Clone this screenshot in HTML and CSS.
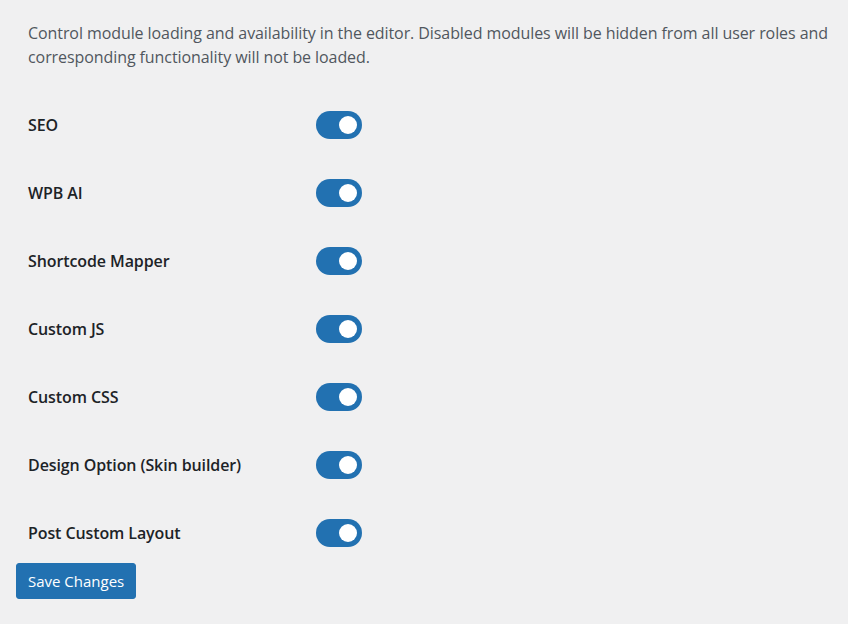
FILE: index.html
```html
<!DOCTYPE html>
<html lang="en">
<head>
    <meta charset="UTF-8">
    <title>Module Manager</title>
    <link rel="stylesheet" href="styles.css">
</head>
<body>
    <div class="wrap">
        <form class="modules-form">
            <p class="description">Control module loading and availability in the editor. Disabled modules will be hidden from all user roles and corresponding functionality will not be loaded.</p>

            <div class="module-list">
                <div class="module-row">
                    <span class="module-name">SEO</span>
                    <label class="toggle"><input type="checkbox" checked><span class="slider"></span></label>
                </div>
                <div class="module-row">
                    <span class="module-name">WPB AI</span>
                    <label class="toggle"><input type="checkbox" checked><span class="slider"></span></label>
                </div>
                <div class="module-row">
                    <span class="module-name">Shortcode Mapper</span>
                    <label class="toggle"><input type="checkbox" checked><span class="slider"></span></label>
                </div>
                <div class="module-row">
                    <span class="module-name">Custom JS</span>
                    <label class="toggle"><input type="checkbox" checked><span class="slider"></span></label>
                </div>
                <div class="module-row">
                    <span class="module-name">Custom CSS</span>
                    <label class="toggle"><input type="checkbox" checked><span class="slider"></span></label>
                </div>
                <div class="module-row">
                    <span class="module-name">Design Option (Skin builder)</span>
                    <label class="toggle"><input type="checkbox" checked><span class="slider"></span></label>
                </div>
                <div class="module-row">
                    <span class="module-name">Post Custom Layout</span>
                    <label class="toggle"><input type="checkbox" checked><span class="slider"></span></label>
                </div>
            </div>

            <p class="submit">
                <button type="button" class="button-primary">Save Changes</button>
            </p>
        </form>
    </div>
</body>
</html>
```

FILE: styles.css
```css
* {
    margin: 0;
    padding: 0;
    box-sizing: border-box;
}

body {
    background: #f0f0f1;
    color: #1d2327;
    font-family: "Open Sans", sans-serif;
    font-size: 16px;
}

.wrap {
    padding: 21px 0 0 16px;
}

.description {
    color: #50575e;
    font-size: 16px;
    line-height: 24px;
    letter-spacing: -0.08px;
    padding-left: 12px;
}

.module-list {
    display: flex;
    flex-direction: column;
    gap: 40px;
    margin-top: 42px;
    padding-left: 12px;
}

.module-row {
    display: grid;
    grid-template-columns: 288px auto;
    align-items: center;
}

.module-name {
    font-size: 16px;
    font-weight: 600;
    letter-spacing: -0.1px;
}

.toggle {
    position: relative;
    display: inline-block;
    width: 46px;
    height: 28px;
    cursor: pointer;
}

.toggle input {
    display: none;
}

.slider {
    position: absolute;
    inset: 0;
    background: #c3c4c7;
    border-radius: 14px;
    transition: background-color 0.2s;
}

.slider::before {
    content: "";
    position: absolute;
    top: 5px;
    left: 5px;
    width: 18px;
    height: 18px;
    border-radius: 50%;
    background: #fff;
    transition: transform 0.2s;
}

.toggle input:checked + .slider {
    background: #2271b1;
}

.toggle input:checked + .slider::before {
    transform: translateX(18px);
}

.submit {
    margin-top: 16px;
}

.button-primary {
    height: 36px;
    padding: 0 11px;
    border: 1px solid #2271b1;
    border-radius: 3px;
    background: #2271b1;
    color: #fff;
    font-family: "Open Sans", sans-serif;
    font-size: 15px;
    cursor: pointer;
}

.button-primary:hover {
    background: #135e96;
}
```
